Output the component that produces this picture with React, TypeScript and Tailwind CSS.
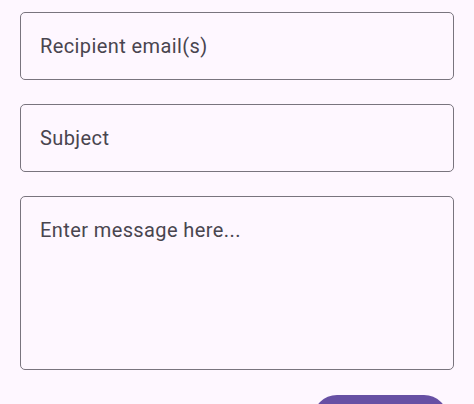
export default function App() {
  return (
    <div className="h-[404px] w-full overflow-hidden bg-[#FEF7FF] font-['Roboto',sans-serif]">
      <div className="flex flex-col gap-6 px-5 pt-3">
        <div className="flex h-[68px] items-center rounded-[5px] border-[1.5px] border-[#79747E] px-[19px]">
          <span className="text-[20px] leading-6 tracking-[0.4px] text-[#49454F]">Recipient email(s)</span>
        </div>
        <div className="flex h-[68px] items-center rounded-[5px] border-[1.5px] border-[#79747E] px-[19px]">
          <span className="text-[20px] leading-6 tracking-[0.4px] text-[#49454F]">Subject</span>
        </div>
        <div className="h-[174px] rounded-[5px] border-[1.5px] border-[#79747E] px-[19px] pt-[21px]">
          <span className="text-[20px] leading-6 tracking-[0.4px] text-[#49454F]">Enter message here...</span>
        </div>
      </div>
      <div className="flex justify-end pr-[26px] pt-[25px]">
        <div className="h-12 w-[135px] rounded-full bg-[#6750A4]" />
      </div>
    </div>
  );
}
